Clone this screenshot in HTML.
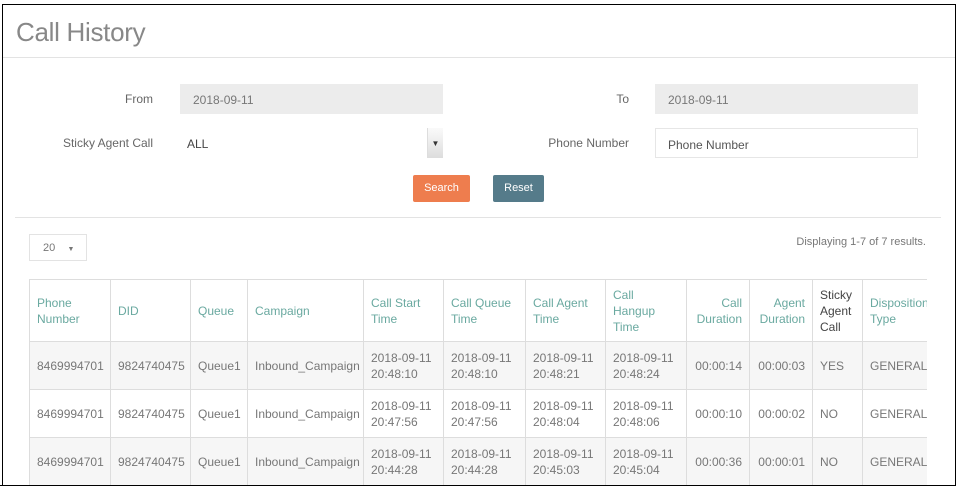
<!DOCTYPE html>
<html><head><meta charset="utf-8"><style>
*{box-sizing:border-box;margin:0;padding:0}
body{width:966px;height:492px;background:#fff;font-family:"Liberation Sans",sans-serif;position:relative;overflow:hidden;color:#666}
.frame{position:absolute;left:2px;top:4px;width:954px;height:482px;border:1px solid #000;border-bottom:none}
.bot{position:absolute;left:0;top:485px;width:956px;height:1px;background:#000}
.title{position:absolute;left:16px;top:17px;font-size:26px;color:#888;font-weight:300;letter-spacing:-0.3px}
.hl{position:absolute;left:3px;top:57px;width:952px;height:1px;background:#e3e3e3}
.lbl{position:absolute;font-size:12px;color:#666;text-align:right}
.inp{position:absolute;height:30px;font-size:12px;padding:9px 13px;color:#777}
.dis{background:#ececec}
.wh{background:#fff;border:1px solid #e6e6e6;color:#555}
.btn{position:absolute;height:27px;color:#fff;font-size:11px;text-align:center;line-height:27px;border-radius:2px}
.div{position:absolute;left:15px;top:217px;width:926px;height:1px;background:#e3e3e3}
.tw{position:absolute;left:29px;top:279px;width:898px;height:206px;overflow:hidden}
table{width:898px;border-collapse:collapse;font-size:12px;table-layout:fixed}
td,th{border:1px solid #ddd;padding:0 7px;font-weight:normal;vertical-align:middle;line-height:16px;color:#777;overflow:hidden}
th{color:#6aa9a0;text-align:left;height:62px}
td{height:48px}
tbody tr{background:#f6f6f6}
.r{text-align:right}
</style></head><body>
<div class="frame"></div><div class="bot"></div>
<div class="title">Call History</div>
<div class="hl"></div>
<div class="lbl" style="left:100px;top:92px;width:53px">From</div>
<div class="inp dis" style="left:180px;top:84px;width:263px">2018-09-11</div>
<div class="lbl" style="left:580px;top:92px;width:49px">To</div>
<div class="inp dis" style="left:655px;top:84px;width:263px">2018-09-11</div>
<div class="lbl" style="left:40px;top:136px;width:113px">Sticky Agent Call</div>
<div class="inp wh" style="left:180px;top:128px;width:263px;border:none;color:#444;padding-left:7px">ALL</div>
<div style="position:absolute;left:427px;top:128px;width:16px;height:30px;background:linear-gradient(#fafafa,#ddd);border-left:1px solid #ddd;font-size:8px;text-align:center;line-height:32px;color:#333">▼</div>
<div class="lbl" style="left:530px;top:136px;width:99px">Phone Number</div>
<div class="inp wh" style="left:655px;top:128px;width:263px;padding-left:12px">Phone Number</div>
<div class="btn" style="left:413px;top:175px;width:57px;background:#ee7d4e">Search</div>
<div class="btn" style="left:493px;top:175px;width:51px;background:#557b8a">Reset</div>
<div class="div"></div>
<div style="position:absolute;left:29px;top:234px;width:58px;height:27px;border:1px solid #e3e3e3;font-size:11px;color:#777;padding:7px 0 0 13px">20 &nbsp;&nbsp;&nbsp;<span style="font-size:7px">▼</span></div>
<div style="position:absolute;right:40px;top:236px;font-size:11px;color:#777">Displaying 1-7 of 7 results.</div>
<div class="tw"><table>
<colgroup><col style="width:81px"><col style="width:80px"><col style="width:57px"><col style="width:116px"><col style="width:80px"><col style="width:82px"><col style="width:80px"><col style="width:81px"><col style="width:63px"><col style="width:63px"><col style="width:50px"><col style="width:65px"></colgroup>
<thead><tr><th>Phone Number</th><th>DID</th><th>Queue</th><th>Campaign</th><th>Call Start Time</th><th>Call Queue Time</th><th>Call Agent Time</th><th>Call<br>Hangup<br>Time</th><th class="r">Call Duration</th><th class="r">Agent Duration</th><th style="color:#444">Sticky Agent Call</th><th>Disposition Type</th></tr></thead>
<tbody>
<tr><td>8469994701</td><td>9824740475</td><td>Queue1</td><td style="white-space:nowrap">Inbound_Campaign</td><td>2018-09-11 20:48:10</td><td>2018-09-11 20:48:10</td><td>2018-09-11 20:48:21</td><td>2018-09-11 20:48:24</td><td class="r">00:00:14</td><td class="r">00:00:03</td><td>YES</td><td>GENERAL</td></tr>
<tr style="background:#fff"><td>8469994701</td><td>9824740475</td><td>Queue1</td><td style="white-space:nowrap">Inbound_Campaign</td><td>2018-09-11 20:47:56</td><td>2018-09-11 20:47:56</td><td>2018-09-11 20:48:04</td><td>2018-09-11 20:48:06</td><td class="r">00:00:10</td><td class="r">00:00:02</td><td>NO</td><td>GENERAL</td></tr>
<tr><td>8469994701</td><td>9824740475</td><td>Queue1</td><td style="white-space:nowrap">Inbound_Campaign</td><td>2018-09-11 20:44:28</td><td>2018-09-11 20:44:28</td><td>2018-09-11 20:45:03</td><td>2018-09-11 20:45:04</td><td class="r">00:00:36</td><td class="r">00:00:01</td><td>NO</td><td>GENERAL</td></tr>
</tbody></table></div>
</body></html>
